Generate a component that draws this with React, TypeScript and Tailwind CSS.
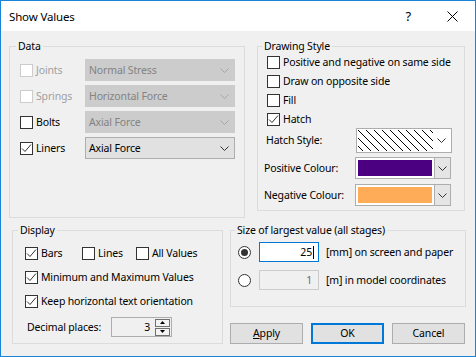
import clsx from "clsx";

function Chevron({ color = "#333333" }: { color?: string }) {
  return (
    <svg width="9" height="5" viewBox="0 0 9 5" className="shrink-0">
      <path d="M0.5 0.5L4.5 4.5L8.5 0.5" fill="none" stroke={color} strokeWidth="1" />
    </svg>
  );
}

function Check({ checked, disabled }: { checked?: boolean; disabled?: boolean }) {
  return (
    <span
      className={clsx(
        "flex h-[13px] w-[13px] shrink-0 items-center justify-center border bg-white",
        disabled ? "border-[#cccccc]" : "border-[#333333]",
      )}
    >
      {checked && (
        <svg width="11" height="11" viewBox="0 0 11 11">
          <path d="M1 5.5L4 8.5L10 1.5" fill="none" stroke="#333333" strokeWidth="1" />
        </svg>
      )}
    </span>
  );
}

function CheckLabel({ text, checked, disabled }: { text: string; checked?: boolean; disabled?: boolean }) {
  return (
    <span className="flex items-center gap-[3px]">
      <Check checked={checked} disabled={disabled} />
      <span className={disabled ? "text-[#a0a0a0]" : "text-black"}>{text}</span>
    </span>
  );
}

function Combo({ text, disabled }: { text: string; disabled?: boolean }) {
  return (
    <div
      className={clsx(
        "flex h-[22px] w-[150px] items-center justify-between border pl-[3px] pr-[5px]",
        disabled ? "border-[#cccccc] bg-[#cccccc] text-[#838383]" : "border-[#adadad] bg-[#e1e1e1] text-black",
      )}
    >
      <span>{text}</span>
      <Chevron color={disabled ? "#a6a6a6" : "#333333"} />
    </div>
  );
}

function Radio({ selected }: { selected?: boolean }) {
  return (
    <span className="flex h-[13px] w-[13px] items-center justify-center rounded-full border border-[#333333] bg-white">
      {selected && <span className="h-[7px] w-[7px] rounded-full bg-[#333333]" />}
    </span>
  );
}

function ColourPick({ colour }: { colour: string }) {
  return (
    <div className="flex h-[22px] w-[96px] border border-[#adadad] bg-white">
      <div className="m-[2px] flex-1" style={{ backgroundColor: colour }} />
      <div className="flex w-[16px] items-center justify-center border-l border-[#adadad] bg-[#e5e5e5]">
        <Chevron />
      </div>
    </div>
  );
}

function Hatch() {
  const lines = [];
  for (let x = -24; x < 80; x += 8) {
    lines.push(<line key={x} x1={x} y1={0} x2={x + 22} y2={22} stroke="#000" strokeWidth="1" />);
  }
  return (
    <svg width="75" height="21" viewBox="0 0 75 21" shapeRendering="crispEdges">
      {lines}
    </svg>
  );
}

export default function App() {
  return (
    <div className="flex h-[357px] w-[476px] flex-col border border-[#1883d7] bg-[#f0f0f0] font-['Noto_Sans','Liberation_Sans',sans-serif] text-[10.5px] leading-[15px] tracking-[-0.15px] text-black">
      <div className="flex h-[30px] shrink-0 items-center bg-white pl-[8px] text-[11.5px]">
        <span>Show Values</span>
        <span className="ml-auto mr-[36px] text-[13px]">?</span>
        <svg width="11" height="11" viewBox="0 0 11 11" className="mr-[17px]">
          <path d="M0.5 0.5L10.5 10.5M10.5 0.5L0.5 10.5" stroke="#000" strokeWidth="1" />
        </svg>
      </div>

      <div className="mt-[8px] flex items-start">
        <fieldset className="ml-[8px] h-[179px] w-[236px] border border-[#dcdcdc]">
          <legend className="ml-[6px] px-[2px]">Data</legend>
          <div className="mt-[5px] flex flex-col gap-[4px] pl-[10px]">
            {[
              { label: "Joints", value: "Normal Stress", dis: true, chk: false, comboDis: true },
              { label: "Springs", value: "Horizontal Force", dis: true, chk: false, comboDis: true },
              { label: "Bolts", value: "Axial Force", dis: false, chk: false, comboDis: true },
              { label: "Liners", value: "Axial Force", dis: false, chk: true, comboDis: false },
            ].map((r) => (
              <div key={r.label} className="flex h-[22px] items-center">
                <div className="w-[65px]">
                  <CheckLabel text={r.label} checked={r.chk} disabled={r.dis} />
                </div>
                <Combo text={r.value} disabled={r.comboDis} />
              </div>
            ))}
          </div>
        </fieldset>

        <fieldset className="ml-[12px] h-[172px] w-[208px] border border-[#dcdcdc]">
          <legend className="ml-[4px] px-[2px]">Drawing Style</legend>
          <div className="-mt-[1px] flex flex-col pl-[9px]">
            <div className="flex h-[19px] items-center">
              <CheckLabel text="Positive and negative on same side" />
            </div>
            <div className="flex h-[19px] items-center">
              <CheckLabel text="Draw on opposite side" />
            </div>
            <div className="flex h-[19px] items-center">
              <CheckLabel text="Fill" />
            </div>
            <div className="flex h-[19px] items-center">
              <CheckLabel text="Hatch" checked />
            </div>
          </div>
          <div className="-mt-[1px] flex h-[25px] items-center pl-[8px]">
            <span className="w-[90px]">Hatch Style:</span>
            <div className="flex h-[25px] w-[96px] items-center border border-[#adadad] bg-white">
              <div className="ml-[1px]">
                <Hatch />
              </div>
              <div className="ml-auto mr-[5px]">
                <Chevron />
              </div>
            </div>
          </div>
          <div className="mt-[4px] flex h-[22px] items-center pl-[6px]">
            <span className="w-[91px]">Positive Colour:</span>
            <ColourPick colour="#4b0082" />
          </div>
          <div className="mt-[5px] flex h-[22px] items-center pl-[6px]">
            <span className="w-[91px]">Negative Colour:</span>
            <ColourPick colour="#ffac58" />
          </div>
        </fieldset>
      </div>

      <div className="mt-[5px] flex items-start">
        <fieldset className="ml-[11px] h-[121px] w-[211px] border border-[#dcdcdc]">
          <legend className="ml-[5px] px-[2px]">Display</legend>
          <div className="mt-[3px] flex flex-col pl-[12px]">
            <div className="flex h-[24px] items-center">
              <div className="w-[57px]">
                <CheckLabel text="Bars" checked />
              </div>
              <div className="w-[54px]">
                <CheckLabel text="Lines" />
              </div>
              <CheckLabel text="All Values" />
            </div>
            <div className="flex h-[24px] items-center">
              <CheckLabel text="Minimum and Maximum Values" checked />
            </div>
            <div className="flex h-[24px] items-center">
              <CheckLabel text="Keep horizontal text orientation" checked />
            </div>
          </div>
          <div className="mt-[4px] flex h-[20px] items-center pl-[14px]">
            <span className="w-[84px]">Decimal places:</span>
            <div className="flex h-[20px] w-[61px] items-center border border-[#adadad] bg-[#f0f0f0]">
              <span className="flex-1 pr-[5px] text-right">3</span>
              <div className="mr-[1px] flex flex-col gap-[1px]">
                <div className="flex h-[8px] w-[15px] items-center justify-center border border-[#707070] bg-[#f3f3f3]">
                  <svg width="5" height="3" viewBox="0 0 5 3">
                    <path d="M2.5 0L5 3H0z" fill="#000" />
                  </svg>
                </div>
                <div className="flex h-[8px] w-[15px] items-center justify-center border border-[#707070] bg-[#f3f3f3]">
                  <svg width="5" height="3" viewBox="0 0 5 3">
                    <path d="M0 0H5L2.5 3z" fill="#000" />
                  </svg>
                </div>
              </div>
            </div>
          </div>
        </fieldset>

        <div className="ml-[7px] flex flex-col">
          <fieldset className="h-[84px] w-[236px] border border-[#dcdcdc]">
            <legend className="ml-[4px] px-[2px]">Size of largest value (all stages)</legend>
            <div className="mt-[4px] flex h-[20px] items-center pl-[7px]">
              <div className="w-[21px]">
                <Radio selected />
              </div>
              <div className="flex h-[20px] w-[60px] items-center justify-end border border-[#0078d7] bg-white pr-[4px]">
                <span>25</span>
                <span className="ml-[1px] h-[13px] w-px bg-black" />
              </div>
              <span className="ml-[7px]">[mm] on screen and paper</span>
            </div>
            <div className="mt-[8px] flex h-[20px] items-center pl-[7px]">
              <div className="w-[21px]">
                <Radio />
              </div>
              <div className="flex h-[20px] w-[60px] items-center justify-end border border-[#cccccc] bg-[#f0f0f0] pr-[6px] text-[#6d6d6d]">
                <span>1</span>
              </div>
              <span className="ml-[7px]">[m] in model coordinates</span>
            </div>
          </fieldset>

          <div className="mt-[16px] flex w-[235px] justify-between">
            <button className="h-[21px] w-[73px] border border-[#adadad] bg-[#e1e1e1]">
              <span className="underline">A</span>pply
            </button>
            <button className="h-[21px] w-[73px] border-2 border-[#0078d7] bg-[#e1e1e1]">OK</button>
            <button className="h-[21px] w-[73px] border border-[#adadad] bg-[#e1e1e1]">Cancel</button>
          </div>
        </div>
      </div>
    </div>
  );
}
